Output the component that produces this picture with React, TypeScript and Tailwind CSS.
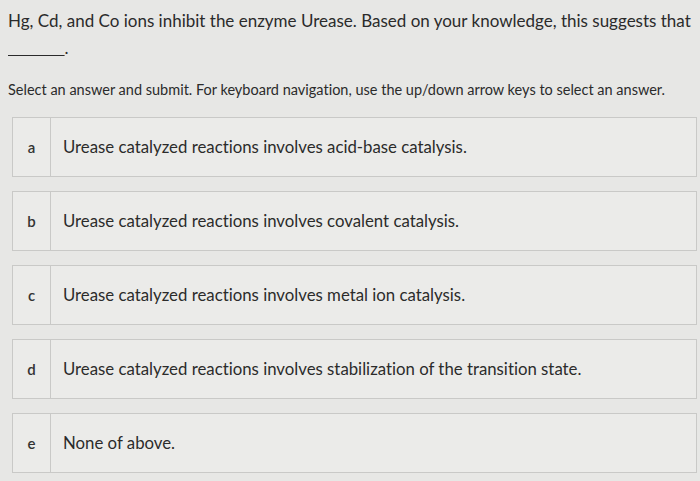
export default function App() {
  const options = [
    { key: "a", text: "Urease catalyzed reactions involves acid-base catalysis." },
    { key: "b", text: "Urease catalyzed reactions involves covalent catalysis." },
    { key: "c", text: "Urease catalyzed reactions involves metal ion catalysis." },
    { key: "d", text: "Urease catalyzed reactions involves stabilization of the transition state." },
    { key: "e", text: "None of above." },
  ];

  return (
    <div
      className="w-[700px] h-[481px] overflow-hidden bg-[#e7e7e5] text-[#2b2b2b] [font-variant-ligatures:none]"
      style={{ fontFamily: "Lato, 'Liberation Sans', sans-serif" }}
    >
      <div className="pl-[8px] pt-[7px] text-[17px] leading-[27px] whitespace-nowrap">
        Hg, Cd, and Co ions inhibit the enzyme Urease. Based on your knowledge, this suggests that
      </div>
      <div className="pl-[8px] text-[17px] leading-[27px]">
        <span className="underline">{"\u00a0\u00a0\u00a0\u00a0\u00a0\u00a0\u00a0\u00a0\u00a0\u00a0\u00a0\u00a0\u00a0"}</span>.
      </div>
      <div className="pl-[8px] pt-[19px] text-[14.5px] leading-[20px]">
        Select an answer and submit. For keyboard navigation, use the up/down arrow keys to select an answer.
      </div>
      <div className="flex flex-col gap-[14px] pl-[12px] pr-[3px] pt-[17px]">
        {options.map((o) => (
          <div key={o.key} className="flex h-[60px] border border-[#c9c9c7] bg-[#ebebe9]">
            <div className="flex w-[38px] items-center justify-center border-r border-[#c9c9c7] text-[15px] font-semibold text-[#333]">
              {o.key}
            </div>
            <div className="flex items-center pl-[12px] text-[16.8px]">{o.text}</div>
          </div>
        ))}
      </div>
    </div>
  );
}
